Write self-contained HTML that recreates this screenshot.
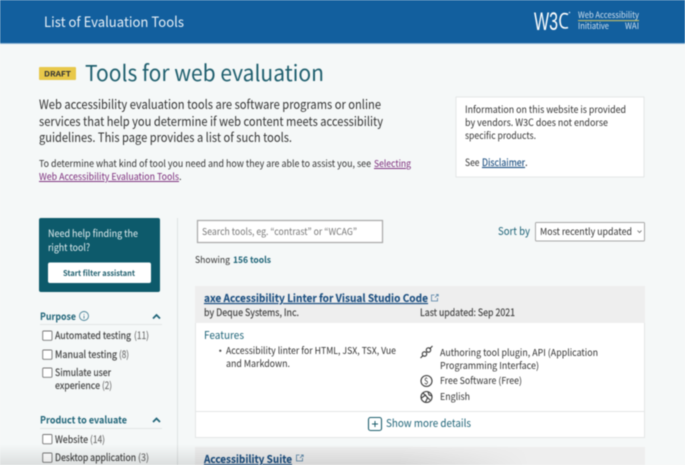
<!DOCTYPE html>
<html lang="en"><head><meta charset="utf-8"><title>Tools for web evaluation</title>
<style>
html,body{margin:0;padding:0;width:685px;height:465px;overflow:hidden;background:#f5f8f8}
svg{display:block;filter:blur(.45px)}
text{font-family:"Noto Sans CJK JP","Liberation Sans",sans-serif;fill:#3a3a3a;font-size:10px;stroke:#3a3a3a;stroke-width:.13}
.b{font-weight:700}
.t{fill:#1f6478;stroke:#1f6478}
.l{fill:#1c4f80;stroke:#1c4f80;text-decoration:underline}
.g{fill:#6f6f6f;stroke:#6f6f6f}
text[style*="fill"]{stroke:none}
</style></head><body>
<svg width="685" height="465" viewBox="0 0 685 465" xmlns="http://www.w3.org/2000/svg">
<defs><linearGradient id="f" x1="0" y1="0" x2="0" y2="1"><stop offset="0" stop-color="#000" stop-opacity="0"/><stop offset="1" stop-color="#000" stop-opacity=".1"/></linearGradient>
<linearGradient id="f2" x1="0" y1="0" x2="1" y2="0"><stop offset="0" stop-color="#fff" stop-opacity="1"/><stop offset=".75" stop-color="#fff" stop-opacity="1"/><stop offset="1" stop-color="#fff" stop-opacity="0"/></linearGradient>
<mask id="m"><rect x="0" y="444" width="530" height="21" fill="url(#f2)"/></mask></defs>
<rect width="685" height="465" fill="#f5f8f8"/>
<rect width="685" height="43" fill="#125f9e"/><rect y="43" width="685" height="1" fill="#8db4d4"/>
<text x="44" y="27" textLength="140" lengthAdjust="spacingAndGlyphs" style="fill:#e6eff6;font-size:14px">List of Evaluation Tools</text>

<text x="534" y="30" textLength="24" lengthAdjust="spacingAndGlyphs" style="fill:#fff;font-size:25px;font-family:'Liberation Sans',sans-serif">W3</text>
<path d="M568 14.5Q561 11 560 20Q560 30 568 27.5" fill="none" stroke="#fff" stroke-width="1.6"/>
<circle cx="569.5" cy="12.5" r=".8" fill="#cfe0ee"/>
<text x="578" y="18" textLength="61" lengthAdjust="spacingAndGlyphs" style="fill:#cfe0ee;font-size:8.5px">Web Accessibility</text>
<rect x="578" y="20" width="61" height="1.2" fill="#b9b66a"/>
<text x="578" y="29" textLength="31" lengthAdjust="spacingAndGlyphs" style="fill:#cfe0ee;font-size:8.5px">Initiative</text>
<text x="625" y="29" textLength="14" lengthAdjust="spacingAndGlyphs" style="fill:#cfe0ee;font-size:8.5px">WAI</text>

<rect x="39" y="67" width="37" height="13" rx="1" fill="#e8c84a"/>
<text class="b" x="44" y="76.5" textLength="27" lengthAdjust="spacingAndGlyphs" style="font-size:7.5px;fill:#333">DRAFT</text>
<text x="85" y="81" textLength="239" lengthAdjust="spacingAndGlyphs" style="font-size:22px;fill:#1f5f6e">Tools for web evaluation</text>

<text x="39" y="109" textLength="342" lengthAdjust="spacingAndGlyphs" style="font-size:12.5px;fill:#333">Web accessibility evaluation tools are software programs or online</text>
<text x="39" y="126" textLength="344" lengthAdjust="spacingAndGlyphs" style="font-size:12.5px;fill:#333">services that help you determine if web content meets accessibility</text>
<text x="39" y="142" textLength="253" lengthAdjust="spacingAndGlyphs" style="font-size:12.5px;fill:#333">guidelines. This page provides a list of such tools.</text>
<text x="39" y="167" textLength="332" lengthAdjust="spacingAndGlyphs" style="font-size:9.5px;fill:#333">To determine what kind of tool you need and how they are able to assist you, see</text>
<text x="374" y="167" textLength="37" lengthAdjust="spacingAndGlyphs" style="font-size:9.5px;fill:#7a2a7a;text-decoration:underline">Selecting</text>
<text x="39" y="180" textLength="140" lengthAdjust="spacingAndGlyphs" style="font-size:9.5px;fill:#7a2a7a;text-decoration:underline">Web Accessibility Evaluation Tools</text>
<text x="179" y="180" style="font-size:9.5px;fill:#333">.</text>

<rect x="456" y="97" width="188" height="80" fill="#fff" stroke="#e4e6e6"/>
<text x="465" y="113" textLength="161" lengthAdjust="spacingAndGlyphs" style="font-size:9.8px;fill:#333">Information on this website is provided</text>
<text x="465" y="126" textLength="143" lengthAdjust="spacingAndGlyphs" style="font-size:9.8px;fill:#333">by vendors. W3C does not endorse</text>
<text x="465" y="139" textLength="71" lengthAdjust="spacingAndGlyphs" style="font-size:9.8px;fill:#333">specific products.</text>
<text x="465" y="166" textLength="14.5" lengthAdjust="spacingAndGlyphs" style="font-size:9.8px;fill:#333">See</text>
<text x="482" y="166" textLength="43" lengthAdjust="spacingAndGlyphs" class="l" style="font-size:9.8px">Disclaimer</text>
<text x="525" y="166" style="font-size:9.8px;fill:#333">.</text>

<rect x="39" y="218" width="121" height="74" rx="2" fill="#0d5a6b"/>
<text x="48" y="237" textLength="90" lengthAdjust="spacingAndGlyphs" style="fill:#e4eef0;font-size:10px">Need help finding the</text>
<text x="48" y="251" textLength="42" lengthAdjust="spacingAndGlyphs" style="fill:#e4eef0;font-size:10px">right tool?</text>
<rect x="48" y="262.5" width="103" height="20.5" rx="2" fill="#fff"/>
<text class="b" x="63" y="276" textLength="72" lengthAdjust="spacingAndGlyphs" style="font-size:8px;fill:#1f5f6e">Start filter assistant</text>
<rect x="177" y="218" width="1" height="247" fill="#dfe3e3"/>

<text class="b t" x="40" y="320" textLength="36" lengthAdjust="spacingAndGlyphs" style="font-size:10px;fill:#1f6478">Purpose</text>
<circle cx="84" cy="316" r="4.5" fill="none" stroke="#4b8398" stroke-width=".9"/><path d="M84 314v.8M84 315.8v2.8" stroke="#4b8398" stroke-width=".9"/>
<path d="M153 318.5l3.5-3.5 3.5 3.5" fill="none" stroke="#1f6478" stroke-width="1.7"/>
<rect x="40" y="324" width="122" height="1" fill="#e2e5e5"/>
<g fill="#fff" stroke="#777" stroke-width=".9">
<rect x="42.7" y="331" width="9.3" height="9.3" rx="1"/><rect x="42.7" y="350" width="9.3" height="9.3" rx="1"/><rect x="42.7" y="368" width="9.3" height="9.3" rx="1"/><rect x="42.7" y="434.5" width="9.3" height="9.3" rx="1"/><rect x="42.7" y="453" width="9.3" height="9.3" rx="1"/>
</g>
<text x="55" y="339" textLength="76" lengthAdjust="spacingAndGlyphs">Automated testing</text><text class="g" x="134" y="339" textLength="15" lengthAdjust="spacingAndGlyphs">(11)</text>
<text x="55" y="358" textLength="62" lengthAdjust="spacingAndGlyphs">Manual testing</text><text class="g" x="119" y="358" textLength="10" lengthAdjust="spacingAndGlyphs">(8)</text>
<text x="55" y="376" textLength="56" lengthAdjust="spacingAndGlyphs">Simulate user</text>
<text x="55" y="389" textLength="45" lengthAdjust="spacingAndGlyphs">experience</text><text class="g" x="102" y="389" textLength="10" lengthAdjust="spacingAndGlyphs">(2)</text>

<text class="b t" x="40" y="423.5" textLength="87" lengthAdjust="spacingAndGlyphs" style="font-size:10px;fill:#1f6478">Product to evaluate</text>
<path d="M153 422l3.5-3.5 3.5 3.5" fill="none" stroke="#1f6478" stroke-width="1.7"/>
<rect x="40" y="428" width="122" height="1" fill="#e2e5e5"/>
<text x="55" y="443" textLength="33" lengthAdjust="spacingAndGlyphs">Website</text><text class="g" x="90" y="443" textLength="15" lengthAdjust="spacingAndGlyphs">(14)</text>
<text x="55" y="461" textLength="81" lengthAdjust="spacingAndGlyphs">Desktop application</text><text class="g" x="138" y="461" textLength="11" lengthAdjust="spacingAndGlyphs">(3)</text>

<rect x="197.5" y="220.5" width="185" height="22" fill="#fff" stroke="#a8a8a8" stroke-width="1.2"/>
<text x="202" y="235" textLength="155" lengthAdjust="spacingAndGlyphs" style="fill:#777;font-size:9.5px">Search tools, eg. “contrast” or “WCAG”</text>
<text x="195" y="263" textLength="35" lengthAdjust="spacingAndGlyphs" style="font-size:9px;fill:#333">Showing</text>
<text class="b t" x="233" y="263" textLength="38" lengthAdjust="spacingAndGlyphs" style="font-size:9px;fill:#1f6478">156 tools</text>
<text class="t" x="498" y="235" textLength="32" lengthAdjust="spacingAndGlyphs" style="font-size:11px;fill:#1f6478">Sort by</text>
<rect x="535.5" y="222.5" width="109" height="18.5" rx="1" fill="#fff" stroke="#a8a8a8"/>
<text x="540" y="235" textLength="92" lengthAdjust="spacingAndGlyphs" style="font-size:9.5px;fill:#333">Most recently updated</text>
<path d="M637.5 230.5l2 2 2-2" fill="none" stroke="#666" stroke-width=".8"/>

<rect x="195.5" y="286.5" width="449" height="151" fill="#fff" stroke="#e4e6e6"/>
<rect x="195" y="286" width="450" height="37" fill="#eeeeee"/>
<text class="b l" x="204" y="302" textLength="224" lengthAdjust="spacingAndGlyphs" style="font-size:10.5px">axe Accessibility Linter for Visual Studio Code</text>
<g fill="none" stroke="#4f7ea3" stroke-width=".8"><path d="M434.5 295h-3v6h6v-3"/><path d="M435 297.5l3-3M436 294.5h2.2v2"/></g>
<text x="204" y="316" textLength="95" lengthAdjust="spacingAndGlyphs">by Deque Systems, Inc.</text>
<text x="420" y="316" textLength="95" lengthAdjust="spacingAndGlyphs">Last updated: Sep 2021</text>
<text class="t" x="204" y="339" textLength="40" lengthAdjust="spacingAndGlyphs" style="font-size:10.5px;fill:#1f6478">Features</text>
<circle cx="220.3" cy="350.7" r="1.1" fill="#444"/>
<text x="226" y="354" textLength="170" lengthAdjust="spacingAndGlyphs" style="font-size:9.5px;fill:#333">Accessibility linter for HTML, JSX, TSX, Vue</text>
<text x="226" y="367" textLength="64" lengthAdjust="spacingAndGlyphs" style="font-size:9.5px;fill:#333">and Markdown.</text>

<g fill="none" stroke="#3a3a3a" stroke-width="1.1">
<path d="M420.5 358l2.7-2.7M429.5 349l3-3"/>
<circle cx="424.5" cy="354" r="2.2"/><circle cx="428.5" cy="350" r="2.2"/>
<circle cx="426.5" cy="381" r="5.5"/>
<circle cx="426.5" cy="397" r="5.5"/>
<path d="M423 393l7 7M421.5 398l4-3 2 3-2 4M428 392l1 3 3 1"/>
</g>
<text x="424" y="384" style="font-size:8px;fill:#3a3a3a">$</text>
<text x="440" y="356" textLength="158" lengthAdjust="spacingAndGlyphs" style="font-size:9.5px;fill:#333">Authoring tool plugin, API (Application</text>
<text x="440" y="369" textLength="99" lengthAdjust="spacingAndGlyphs" style="font-size:9.5px;fill:#333">Programming Interface)</text>
<text x="440" y="384" textLength="82" lengthAdjust="spacingAndGlyphs" style="font-size:9.5px;fill:#333">Free Software (Free)</text>
<text x="440" y="400" textLength="30" lengthAdjust="spacingAndGlyphs" style="font-size:9.5px;fill:#333">English</text>
<rect x="195" y="411" width="450" height="1" fill="#e4e6e6"/>
<rect x="368.5" y="417.5" width="13" height="13" rx="2" fill="#fff" stroke="#1f5f6e" stroke-width="1.1"/>
<path d="M375 421v6M372 424h6" stroke="#1f5f6e" stroke-width="1"/>
<text class="t" x="386" y="427" textLength="85" lengthAdjust="spacingAndGlyphs" style="font-size:10.5px;fill:#1f6478">Show more details</text>

<rect x="195" y="447" width="450" height="18" fill="#eeeeee"/>
<text class="b l" x="204" y="463" textLength="88" lengthAdjust="spacingAndGlyphs" style="font-size:10.5px">Accessibility Suite</text>
<g fill="none" stroke="#4f7ea3" stroke-width=".8"><path d="M299.5 455h-3v6h6v-3"/><path d="M300 458l3-3M301 455h2.2v2"/></g>

<rect x="0" y="444" width="530" height="21" fill="url(#f)" mask="url(#m)"/>
</svg>
</body></html>
